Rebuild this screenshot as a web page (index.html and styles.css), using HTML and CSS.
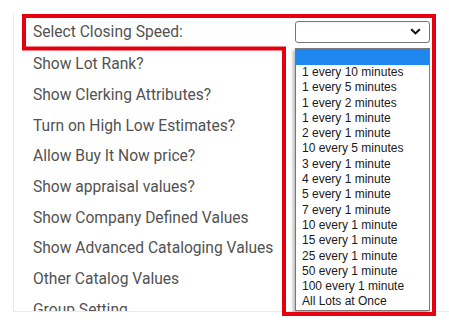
FILE: index.html
```html
<!DOCTYPE html>
<html>
<head>
<meta charset="utf-8">
<link rel="stylesheet" href="styles.css">
</head>
<body>
<div class="panel">
  <div class="row first">
    <span class="label">Select Closing Speed:</span>
    <div class="select">
      <svg class="chev" width="11" height="7" viewBox="0 0 11 7"><path d="M1.2 1.2 L5.5 5.4 L9.8 1.2" fill="none" stroke="#111" stroke-width="2.1"/></svg>
    </div>
  </div>
  <div class="row"><span class="label">Show Lot Rank?</span></div>
  <div class="row"><span class="label">Show Clerking Attributes?</span></div>
  <div class="row"><span class="label">Turn on High Low Estimates?</span></div>
  <div class="row"><span class="label">Allow Buy It Now price?</span></div>
  <div class="row"><span class="label">Show appraisal values?</span></div>
  <div class="row"><span class="label">Show Company Defined Values</span></div>
  <div class="row"><span class="label">Show Advanced Cataloging Values</span></div>
  <div class="row"><span class="label">Other Catalog Values</span></div>
  <div class="row"><span class="label">Group Setting</span></div>
</div>

<ul class="popup">
  <li class="opt selected">&nbsp;</li>
  <li class="opt">1 every 10 minutes</li>
  <li class="opt">1 every 5 minutes</li>
  <li class="opt">1 every 2 minutes</li>
  <li class="opt">1 every 1 minute</li>
  <li class="opt">2 every 1 minute</li>
  <li class="opt">10 every 5 minutes</li>
  <li class="opt">3 every 1 minute</li>
  <li class="opt">4 every 1 minute</li>
  <li class="opt">5 every 1 minute</li>
  <li class="opt">7 every 1 minute</li>
  <li class="opt">10 every 1 minute</li>
  <li class="opt">15 every 1 minute</li>
  <li class="opt">25 every 1 minute</li>
  <li class="opt">50 every 1 minute</li>
  <li class="opt">100 every 1 minute</li>
  <li class="opt">All Lots at Once</li>
</ul>

<svg class="annot" width="449" height="329" viewBox="0 0 449 329">
  <path d="M24 16 H434 V314 H284 V48.5 H24 Z" fill="none" stroke="#e5000f" stroke-width="4" stroke-linejoin="miter"/>
</svg>
</body>
</html>
```
FILE: styles.css
```css
html, body {
  margin: 0;
  padding: 0;
  background: #ffffff;
}
body {
  width: 449px;
  height: 329px;
  overflow: hidden;
  position: relative;
  font-family: Roboto, "Liberation Sans", sans-serif;
}
.panel {
  margin: 14px 0 0 13px;
  height: 298px;
  border-left: 1px solid #e9e9e9;
  border-bottom: 1px solid #e9e9e9;
  overflow: hidden;
  box-sizing: border-box;
  padding-left: 19px;
}
.row {
  height: 30.7px;
  display: flex;
  align-items: center;
  justify-content: space-between;
}
.row.first {
  height: 35px;
  padding-right: 19px;
}
.label {
  font-size: 15.6px;
  color: #525252;
  white-space: nowrap;
}
.select {
  width: 135px;
  height: 22px;
  box-sizing: border-box;
  border: 1px solid #767676;
  border-radius: 3px;
  background: #fff;
  display: flex;
  align-items: center;
  justify-content: flex-end;
  padding-right: 8px;
}
.chev {
  display: block;
}
.popup {
  position: absolute;
  left: 295px;
  top: 48px;
  width: 135px;
  margin: 0;
  padding: 0;
  list-style: none;
  box-sizing: border-box;
  border: 1px solid #7a7a7a;
  background: #fff;
  box-shadow: -2px 2px 3px rgba(0,0,0,0.28);
  font-family: "Liberation Sans", Arial, sans-serif;
  font-size: 12px;
  color: #1a1a1a;
}
.opt {
  height: 15.3px;
  line-height: 15.3px;
  padding-left: 6px;
  white-space: nowrap;
}
.opt.selected {
  height: 16px;
  background: #1e88f0;
}
.annot {
  position: absolute;
  left: 0;
  top: 0;
  pointer-events: none;
}
```
